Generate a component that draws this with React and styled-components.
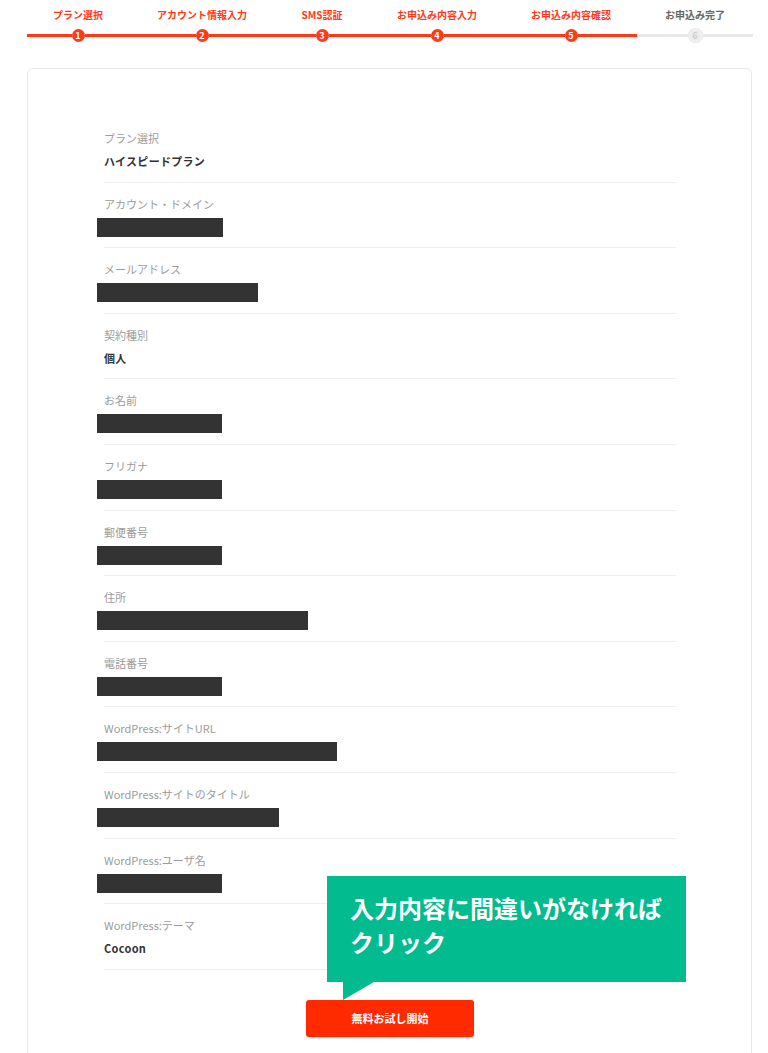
import React from "react";
import styled, { createGlobalStyle } from "styled-components";

const GlobalStyle = createGlobalStyle`
  body {
    margin: 0;
    background: #fff;
    font-family: "Noto Sans CJK JP", "Noto Sans", sans-serif;
    color: #333;
  }
`;

const RED = "#ff3a17";

const Page = styled.div`
  width: 768px;
  height: 1053px;
  overflow: hidden;
`;

const Stepper = styled.div`
  display: flex;
  padding: 7px 0 0 27px;
`;

const Step = styled.div`
  width: ${p => p.$half * 2 + 12}px;
  display: flex;
  flex-direction: column;
  align-items: center;
`;

const StepLabel = styled.div`
  font-size: 10px;
  line-height: 16px;
  font-weight: 700;
  white-space: nowrap;
  color: ${p => (p.$done ? RED : "#666")};
`;

const NodeRow = styled.div`
  align-self: stretch;
  display: flex;
  align-items: center;
  margin-top: 6px;
`;

const Segment = styled.div`
  flex: 1;
  height: 3px;
  background: ${p => (p.$done ? RED : "#e9e9e9")};
`;

const Node = styled.div`
  width: 13px;
  height: 13px;
  border-radius: 50%;
  box-sizing: border-box;
  display: flex;
  align-items: center;
  justify-content: center;
  font-size: 9px;
  font-weight: 700;
  line-height: 1;
  background: ${p => (p.$done ? RED : "#ececec")};
  color: ${p => (p.$done ? "#fff" : "#d0d0d0")};
  border: ${p => (p.$done ? "none" : "1px solid #f7f7f7")};
  box-shadow: ${p => (p.$done ? "none" : "0 0 0 1px #e6e6e6")};
`;

const Card = styled.div`
  position: relative;
  margin: 26px 0 0 27px;
  width: 725px;
  box-sizing: border-box;
  border: 1px solid #e8e8e8;
  border-radius: 6px;
  padding: 48px 75px 60px 76px;
`;

const Row = styled.div`
  padding: 14px 0 10.6px;
  border-bottom: 1px solid #eeeeee;
`;

const Label = styled.div`
  font-size: 11px;
  line-height: 14px;
  color: #9c9c9c;
`;

const Value = styled.div`
  margin-top: 7px;
  height: 19px;
  line-height: 19px;
  font-size: 11px;
  font-weight: 700;
  color: #333;
  letter-spacing: 0.3px;
`;

const Redacted = styled.div`
  margin: 7px 0 0 -7px;
  height: 19px;
  width: ${p => p.$w}px;
  background: #333;
`;

const Actions = styled.div`
  display: flex;
  justify-content: center;
  padding-top: 30px;
`;

const StartButton = styled.button`
  width: 168px;
  height: 37px;
  border: none;
  border-radius: 3px;
  background: #ff2a00;
  color: #fff;
  font-family: inherit;
  font-size: 11px;
  font-weight: 700;
  box-shadow: 0 1px 2px rgba(0, 0, 0, 0.15);
`;

const Callout = styled.div`
  position: absolute;
  left: 299px;
  top: 807px;
  width: 359px;
  height: 106px;
  box-sizing: border-box;
  padding: 15px 0 0 23px;
  background: #02bb8f;
  color: #fff;
  font-size: 24px;
  line-height: 34px;
  font-weight: 700;

  &::after {
    content: "";
    position: absolute;
    left: 16px;
    top: 100%;
    width: 0;
    height: 0;
    border-top: 18px solid #02bb8f;
    border-right: 31px solid transparent;
  }
`;

const steps = [
  { label: "プラン選択", half: 45 },
  { label: "アカウント情報入力", half: 67 },
  { label: "SMS認証", half: 41 },
  { label: "お申込み内容入力", half: 62 },
  { label: "お申込み内容確認", half: 60 },
  { label: "お申込み完了", half: 52 },
];

const rows = [
  { label: "プラン選択", value: "ハイスピードプラン" },
  { label: "アカウント・ドメイン", hidden: 126 },
  { label: "メールアドレス", hidden: 161 },
  { label: "契約種別", value: "個人" },
  { label: "お名前", hidden: 125 },
  { label: "フリガナ", hidden: 125 },
  { label: "郵便番号", hidden: 125 },
  { label: "住所", hidden: 211 },
  { label: "電話番号", hidden: 125 },
  { label: "WordPress:サイトURL", hidden: 240 },
  { label: "WordPress:サイトのタイトル", hidden: 182 },
  { label: "WordPress:ユーザ名", hidden: 125 },
  { label: "WordPress:テーマ", value: "Cocoon" },
];

export default function App() {
  return (
    <Page>
      <GlobalStyle />
      <Stepper>
        {steps.map((s, i) => {
          const done = i < 5;
          return (
            <Step key={s.label} $half={s.half}>
              <StepLabel $done={done}>{s.label}</StepLabel>
              <NodeRow>
                <Segment $done={done} />
                <Node $done={done}>{i + 1}</Node>
                <Segment $done={done} />
              </NodeRow>
            </Step>
          );
        })}
      </Stepper>

      <Card>
        {rows.map(r => (
          <Row key={r.label}>
            <Label>{r.label}</Label>
            {r.value ? <Value>{r.value}</Value> : <Redacted $w={r.hidden} />}
          </Row>
        ))}
        <Actions>
          <StartButton>無料お試し開始</StartButton>
        </Actions>
        <Callout>
          入力内容に間違いがなければ
          <br />
          クリック
        </Callout>
      </Card>
    </Page>
  );
}
